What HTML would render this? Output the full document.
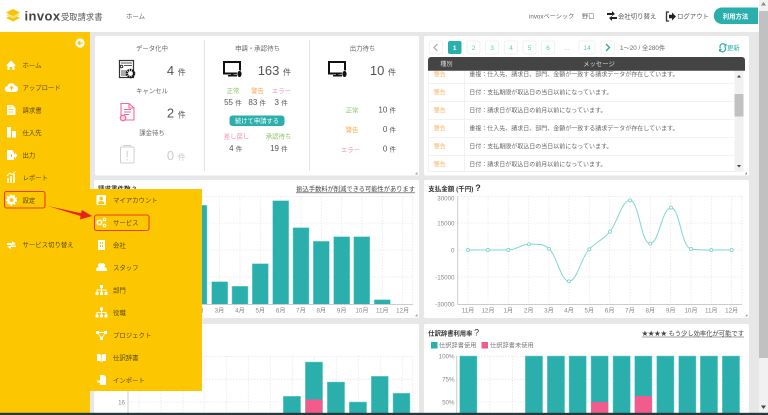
<!DOCTYPE html>
<html lang="ja">
<head>
<meta charset="utf-8">
<title>invox 受取請求書</title>
<style>
html,body{margin:0;padding:0;width:768px;height:415px;overflow:hidden;background:#e7e7e7}
svg{display:block;position:absolute;left:0;top:0;filter:blur(.3px)}
text{font-family:"Liberation Sans","Noto Sans CJK JP",sans-serif;fill:#555}
.s text{font-size:6.4px;fill:#5c4c08}
.c text{font-size:6.4px;fill:#666;text-anchor:middle}
.n text{font-size:8px;fill:#555;text-anchor:end}
.n tspan{font-size:6.5px}
.big text{font-size:13px;fill:#555;text-anchor:end}
.big tspan{font-size:8px}
.ax text{font-size:6.2px;fill:#888;text-anchor:middle}
.ay text{font-size:6.2px;fill:#888;text-anchor:end}
.g line{stroke:#e6e6e6;stroke-width:.8;stroke-dasharray:1.5 1.5}
.b rect{fill:#2aafad;stroke:#7fd6d2;stroke-width:.5}
.w{fill:#fff}
.row text{font-size:6px;fill:#666}
.row .k{fill:#fbb25c}
</style>
</head>
<body>
<svg width="768" height="415" viewBox="0 0 768 415" xmlns="http://www.w3.org/2000/svg">
<!-- header -->
<rect x="0" y="0" width="768" height="32" fill="#fff"/>
<g>
<path d="M13 14.5 L20 18 L13 21.5 L6 18Z" fill="#f8c400"/>
<path d="M13 11.5 L20 15 L13 18.5 L6 15Z" fill="#fde08a"/>
<path d="M13 9 L20 12.5 L13 16 L6 12.5Z" fill="#f8c400"/>
</g>
<text x="24.5" y="20.5" style="font-size:13px;font-weight:bold;letter-spacing:.4px;fill:#444">invox</text>
<text x="61" y="20" style="font-size:8.3px;fill:#555">受取請求書</text>
<text x="126" y="18.5" style="font-size:6.4px;fill:#666">ホーム</text>
<text x="529" y="18.3" style="font-size:6.2px;fill:#666">invoxベーシック</text>
<text x="582" y="18.3" style="font-size:6.2px;fill:#666">野口</text>
<path d="M607 13 L612 13 L612 11 L615 14 L612 16 L612 15 L607 15Z M617 19 L612 19 L612 21 L609 18 L612 16 L612 17 L617 17Z" fill="#222"/>
<text x="618" y="18.5" style="font-size:6.4px;fill:#555">会社切り替え</text>
<path d="M669 12 H666.5 V21 H669" fill="none" stroke="#333" stroke-width="1.3"/>
<path d="M669 14.7 H672 V12.5 L676 16.5 L672 20.5 V18.3 H669Z" fill="#222"/>
<text x="677" y="18.5" style="font-size:6.4px;fill:#555">ログアウト</text>
<path d="M722 7.5 H758 V24 H722 A8.25 8.25 0 0 1 722 7.5Z" fill="#2aafad"/>
<text x="735.5" y="18.3" text-anchor="middle" style="font-size:6.4px;font-weight:bold;fill:#fff">利用方法</text>

<!-- scrollbar -->
<rect x="759" y="0" width="9" height="413" fill="#f1f1f1"/>
<rect x="759" y="11" width="9" height="347" fill="#c1c1c1"/>
<path d="M763.5 2 L766 5.5 H761Z" fill="#888"/>
<path d="M763.5 409 L766 405.5 H761Z" fill="#444"/>

<!-- top-left card -->
<rect x="95" y="36" width="324" height="139.5" rx="2" class="w"/>
<line x1="204.5" y1="40" x2="204.5" y2="171" stroke="#e5e5e5"/>
<line x1="309.5" y1="40" x2="309.5" y2="171" stroke="#e5e5e5"/>
<path d="M417 172.5 V174 H415.5" stroke="#777" fill="none" stroke-width=".8"/>
<g class="c">
<text x="152" y="50.3">データ化中</text>
<text x="152" y="93">キャンセル</text>
<text x="152" y="135">課金待ち</text>
<text x="257.5" y="50.3">申請・承認待ち</text>
<text x="362.5" y="50.3">出力待ち</text>
<text x="233" y="93" style="fill:#8cc46a">正常</text>
<text x="257.5" y="93" style="fill:#fba94c">警告</text>
<text x="281.5" y="93" style="fill:#f78ab0">エラー</text>
<text x="236.5" y="138.3" style="fill:#f78ab0">差し戻し</text>
<text x="278.5" y="138.3" style="fill:#8cc46a">承認待ち</text>
<text x="352" y="112.3" style="fill:#8cc46a">正常</text>
<text x="352" y="132" style="fill:#fba94c">警告</text>
<text x="350.5" y="151.8" style="fill:#f78ab0">エラー</text>
</g>
<!-- icons card -->
<g>
<rect x="119.5" y="60.5" width="14" height="17" fill="#fff" stroke="#333" stroke-width="1.2"/>
<path d="M121 63 H132 M124 65.5 H132 M121 71 H127 M121 73 H127 M121 75 H127" stroke="#555" stroke-width="1"/>
<circle cx="121.5" cy="66.5" r="1.3" fill="none" stroke="#333"/>
<circle cx="130.5" cy="73.5" r="3.6" fill="none" stroke="#111" stroke-width="2.4" stroke-dasharray="1.6 .7"/>
<circle cx="130.5" cy="73.5" r="1" fill="#fff"/>
</g>
<g fill="none" stroke="#f5679a" stroke-width="1.1">
<path d="M121 118 V103.5 H129 L134 108 V120 H124"/>
<path d="M129 103.5 V108 H134 M124 109.5 H131 M124 112 H131 M124 114.5 H129"/>
<circle cx="123" cy="118" r="2.8" fill="#fbd2e0"/>
</g>
<g fill="none" stroke="#d0d0d0" stroke-width="1">
<rect x="120.5" y="147" width="13.5" height="16" rx="1"/>
<path d="M124 147 V145.5 H130.5 V147"/>
<path d="M127.2 151 V157.5 M127.2 159 V160.5"/>
</g>
<g id="mon">
<rect x="224" y="62" width="16" height="11.5" fill="none" stroke="#111" stroke-width="2"/>
<path d="M228 76.5 H237 V75 H233.5 V73.5 H231 V75 H228Z" fill="#111"/>
<ellipse cx="239.5" cy="74" rx="2.4" ry="3.4" fill="#111" stroke="#fff" stroke-width=".6"/>
</g>
<g>
<rect x="329" y="62" width="16" height="11.5" fill="none" stroke="#111" stroke-width="2"/>
<path d="M333 76.5 H342 V75 H338.5 V73.5 H336 V75 H333Z" fill="#111"/>
<ellipse cx="344.5" cy="74" rx="2.4" ry="3.4" fill="#111" stroke="#fff" stroke-width=".6"/>
</g>
<g class="big">
<text x="185.7" y="75">4 <tspan>件</tspan></text>
<text x="185.7" y="117.5">2 <tspan>件</tspan></text>
<text x="185.7" y="160" style="fill:#ccc">0 <tspan>件</tspan></text>
<text x="291" y="75">163 <tspan>件</tspan></text>
<text x="396" y="75">10 <tspan>件</tspan></text>
</g>
<g class="n">
<text x="241.7" y="105">55 <tspan>件</tspan></text>
<text x="266" y="105">83 <tspan>件</tspan></text>
<text x="287.7" y="105">3 <tspan>件</tspan></text>
<text x="242.3" y="151">4 <tspan>件</tspan></text>
<text x="287.7" y="151">19 <tspan>件</tspan></text>
<text x="396" y="112.5">10 <tspan>件</tspan></text>
<text x="396" y="132">0 <tspan>件</tspan></text>
<text x="396" y="151.5">0 <tspan>件</tspan></text>
</g>
<rect x="229.5" y="115.5" width="55" height="10.5" rx="3" fill="#2aafad"/>
<text x="257" y="123" text-anchor="middle" style="font-size:6.3px;fill:#fff">続けて申請する</text>

<!-- messages card -->
<rect x="424" y="36" width="325" height="139.5" rx="2" class="w"/>
<g fill="#fff" stroke="#eee" stroke-width=".8">
<rect x="429.5" y="41" width="13" height="13" rx="2"/>
<rect x="467" y="41" width="13" height="13" rx="2"/>
<rect x="485.5" y="41" width="13" height="13" rx="2"/>
<rect x="504.5" y="41" width="13" height="13" rx="2"/>
<rect x="523" y="41" width="13" height="13" rx="2"/>
<rect x="541.5" y="41" width="13" height="13" rx="2"/>
<rect x="579" y="41" width="16" height="13" rx="2"/>
<rect x="601" y="41" width="13.5" height="13" rx="2"/>
</g>
<rect x="448" y="41" width="13.5" height="13" rx="2" fill="#2aafad"/>
<path d="M437.5 44 L434 47.5 L437.5 51" fill="none" stroke="#aaa" stroke-width="1.2"/>
<path d="M606 44 L609.5 47.5 L606 51" fill="none" stroke="#2aafad" stroke-width="1.4"/>
<g>
<text x="454.7" y="49.8" text-anchor="middle" style="font-size:6.5px;font-weight:bold;fill:#fff">1</text>
<text x="473.5" y="49.8" text-anchor="middle" style="font-size:6.5px;fill:#5cc">2</text>
<text x="492" y="49.8" text-anchor="middle" style="font-size:6.5px;fill:#5cc">3</text>
<text x="511" y="49.8" text-anchor="middle" style="font-size:6.5px;fill:#5cc">4</text>
<text x="529.5" y="49.8" text-anchor="middle" style="font-size:6.5px;fill:#5cc">5</text>
<text x="548" y="49.8" text-anchor="middle" style="font-size:6.5px;fill:#5cc">6</text>
<text x="567" y="49.8" text-anchor="middle" style="font-size:6.5px;fill:#aaa">...</text>
<text x="587" y="49.8" text-anchor="middle" style="font-size:6.5px;fill:#5cc">14</text>
</g>
<text x="620" y="49.8" style="font-size:6.3px;fill:#666">1〜20 / 全280件</text>
<path d="M720.5 48.5 A3 3 0 0 1 725.5 45 M725 47 A3 3 0 0 1 720 50.5" fill="none" stroke="#2aafad" stroke-width="1.2"/>
<path d="M726.5 43.5 V46.5 H723.5Z M719 52 V49 H722Z" fill="#2aafad"/>
<text x="727" y="49.8" style="font-size:6.4px;fill:#2aafad">更新</text>

<rect x="428" y="71" width="317" height="100" fill="#fff"/>
<path d="M428 60 A3 3 0 0 1 431 57 H742 A3 3 0 0 1 745 60 V70.7 H428Z" fill="#444"/>
<text x="446.5" y="66" text-anchor="middle" style="font-size:6.1px;fill:#ddd">種別</text>
<text x="599" y="66" text-anchor="middle" style="font-size:6.4px;fill:#ddd">メッセージ</text>
<g stroke="#eee" stroke-width=".8">
<line x1="428" y1="83.5" x2="734" y2="83.5"/>
<line x1="428" y1="101.5" x2="734" y2="101.5"/>
<line x1="428" y1="119.5" x2="734" y2="119.5"/>
<line x1="428" y1="137.5" x2="734" y2="137.5"/>
<line x1="428" y1="155.5" x2="734" y2="155.5"/>
<line x1="428" y1="171.3" x2="745" y2="171.3"/>
<line x1="428.3" y1="71" x2="428.3" y2="171"/>
<line x1="464.5" y1="71" x2="464.5" y2="171"/>
</g>
<g class="row">
<text class="k" x="433.7" y="76.6">警告</text><text x="469.3" y="76.6">重複：仕入先、請求日、部門、金額が一致する請求データが存在しています。</text>
<text class="k" x="433.7" y="94.6">警告</text><text x="469.3" y="94.6">日付：支払期限が取込日の当日以前になっています。</text>
<text class="k" x="433.7" y="112.6">警告</text><text x="469.3" y="112.6">日付：請求日が取込日の前月以前になっています。</text>
<text class="k" x="433.7" y="130.6">警告</text><text x="469.3" y="130.6">重複：仕入先、請求日、部門、金額が一致する請求データが存在しています。</text>
<text class="k" x="433.7" y="148.6">警告</text><text x="469.3" y="148.6">日付：支払期限が取込日の当日以前になっています。</text>
<text class="k" x="433.7" y="166.6">警告</text><text x="469.3" y="166.6">日付：請求日が取込日の前月以前になっています。</text>
</g>
<rect x="734.5" y="71" width="9" height="100" fill="#f1f1f1"/>
<rect x="734.5" y="94" width="9" height="22.5" fill="#c1c1c1"/>
<path d="M739 75 L741 77.5 H737Z M739 167.5 L741 165 H737Z" fill="#444"/>
<path d="M746.5 172.5 V174 H745" stroke="#777" fill="none" stroke-width=".8"/>

<!-- left chart card -->
<rect x="94" y="180" width="325" height="138" rx="2" class="w"/>
<text x="98" y="191" style="font-size:6.5px;font-weight:bold;fill:#333">請求書件数 ?</text>
<text x="415" y="191.2" text-anchor="end" style="font-size:6.26px;fill:#444">振込手数料が削減できる可能性があります</text>
<line x1="296" y1="192.8" x2="415" y2="192.8" stroke="#444" stroke-width=".6"/>
<g class="g">
<line x1="125" y1="196.5" x2="413" y2="196.5"/><line x1="125" y1="223" x2="413" y2="223"/><line x1="125" y1="250" x2="413" y2="250"/><line x1="125" y1="277" x2="413" y2="277"/>
<line x1="219.5" y1="196" x2="219.5" y2="304"/><line x1="240" y1="196" x2="240" y2="304"/><line x1="260.3" y1="196" x2="260.3" y2="304"/><line x1="280.7" y1="196" x2="280.7" y2="304"/><line x1="301" y1="196" x2="301" y2="304"/><line x1="321.3" y1="196" x2="321.3" y2="304"/><line x1="341.7" y1="196" x2="341.7" y2="304"/><line x1="362" y1="196" x2="362" y2="304"/><line x1="382.3" y1="196" x2="382.3" y2="304"/><line x1="402.7" y1="196" x2="402.7" y2="304"/><line x1="412.7" y1="196" x2="412.7" y2="304"/>
</g>
<g class="b">
<rect x="191" y="205.3" width="16" height="99"/>
<rect x="211.7" y="281.7" width="16" height="22.6"/>
<rect x="232" y="286.3" width="16" height="18"/>
<rect x="252.3" y="263.7" width="16" height="40.6"/>
<rect x="272.7" y="200.7" width="16" height="103.6"/>
<rect x="293" y="227.7" width="16" height="76.6"/>
<rect x="313.3" y="241.3" width="16" height="63"/>
<rect x="333.7" y="236.7" width="16" height="67.6"/>
<rect x="353.8" y="236.7" width="16" height="67.6"/>
<rect x="374.3" y="299.7" width="16" height="4.6"/>
</g>
<line x1="120" y1="304.5" x2="413" y2="304.5" stroke="#ccc"/>
<g class="ax">
<text x="199" y="312.3">2月</text><text x="219.5" y="312.3">3月</text><text x="240" y="312.3">4月</text><text x="260.3" y="312.3">5月</text><text x="280.7" y="312.3">6月</text><text x="301" y="312.3">7月</text><text x="321.3" y="312.3">8月</text><text x="341.7" y="312.3">9月</text><text x="362" y="312.3">10月</text><text x="382.3" y="312.3">11月</text><text x="402.7" y="312.3">12月</text>
</g>
<path d="M417 314.5 V316 H415.5" stroke="#777" fill="none" stroke-width=".8"/>

<!-- line chart card -->
<rect x="424" y="180" width="325" height="138" rx="2" class="w"/>
<text x="428.3" y="191" style="font-size:6.5px;font-weight:bold;fill:#333">支払金額 (千円) <tspan style="font-size:9px">?</tspan></text>
<g class="g">
<line x1="458" y1="196.5" x2="742" y2="196.5"/><line x1="458" y1="223" x2="742" y2="223"/><line x1="458" y1="250" x2="742" y2="250"/><line x1="458" y1="277" x2="742" y2="277"/>
<line x1="468" y1="196" x2="468" y2="304"/><line x1="488" y1="196" x2="488" y2="304"/><line x1="508.3" y1="196" x2="508.3" y2="304"/><line x1="528.7" y1="196" x2="528.7" y2="304"/><line x1="549" y1="196" x2="549" y2="304"/><line x1="569" y1="196" x2="569" y2="304"/><line x1="589.3" y1="196" x2="589.3" y2="304"/><line x1="609.7" y1="196" x2="609.7" y2="304"/><line x1="630" y1="196" x2="630" y2="304"/><line x1="650.3" y1="196" x2="650.3" y2="304"/><line x1="670.7" y1="196" x2="670.7" y2="304"/><line x1="691" y1="196" x2="691" y2="304"/><line x1="711.3" y1="196" x2="711.3" y2="304"/><line x1="731.7" y1="196" x2="731.7" y2="304"/><line x1="742" y1="196" x2="742" y2="304"/>
</g>
<path d="M457.7 196 V304.5 H742" fill="none" stroke="#ccc"/>
<g class="ay">
<text x="454.5" y="200.5">30000</text><text x="454.5" y="225.3">15000</text><text x="454.5" y="252.3">0</text><text x="454.5" y="279.3">-15000</text><text x="454.5" y="306.3">-30000</text>
</g>
<path d="M468 250 L508 250 C516 250,521 244.3,529 244.3 C537 244.3,543 243,549 248.7 C557 256,561 281.3,569 281.3 C577 281.3,581 258,589 249.3 C596 242,603 240,610 231.7 C618 221,622 200.3,630 200.3 C639 200.3,641 243.7,650 243.7 C659 243.7,662 207.7,671 207.7 C680 207.7,681 247,691 249 C697 250,703 250,711 250 L732 250" fill="none" stroke="#7fd6d2" stroke-width="1"/>
<g fill="#fff" stroke="#7fd6d2" stroke-width=".9">
<circle cx="468" cy="250" r="1.5"/><circle cx="488" cy="250" r="1.5"/><circle cx="508.3" cy="250" r="1.5"/><circle cx="529" cy="244.3" r="1.5"/><circle cx="549" cy="248.7" r="1.5"/><circle cx="569" cy="281.3" r="1.5"/><circle cx="589.3" cy="249.3" r="1.5"/><circle cx="610" cy="231.7" r="1.5"/><circle cx="630" cy="200.3" r="1.5"/><circle cx="650.3" cy="243.7" r="1.5"/><circle cx="671" cy="207.7" r="1.5"/><circle cx="691" cy="249" r="1.5"/><circle cx="711.3" cy="250" r="1.5"/><circle cx="731.7" cy="250" r="1.5"/>
</g>
<g class="ax">
<text x="468" y="312.3">11月</text><text x="488" y="312.3">12月</text><text x="508.3" y="312.3">1月</text><text x="528.7" y="312.3">2月</text><text x="549" y="312.3">3月</text><text x="569" y="312.3">4月</text><text x="589.3" y="312.3">5月</text><text x="609.7" y="312.3">6月</text><text x="630" y="312.3">7月</text><text x="650.3" y="312.3">8月</text><text x="670.7" y="312.3">9月</text><text x="691" y="312.3">10月</text><text x="711.3" y="312.3">11月</text><text x="731.7" y="312.3">12月</text>
</g>
<path d="M747 314.5 V316 H745.5" stroke="#777" fill="none" stroke-width=".8"/>

<!-- bottom left card -->
<rect x="94" y="324" width="325" height="95" rx="2" class="w"/>
<g class="g">
<line x1="128" y1="356.5" x2="413" y2="356.5"/><line x1="128" y1="379.3" x2="413" y2="379.3"/><line x1="128" y1="402" x2="413" y2="402"/>
<line x1="204.3" y1="356" x2="204.3" y2="413"/><line x1="226.3" y1="356" x2="226.3" y2="413"/><line x1="248.3" y1="356" x2="248.3" y2="413"/><line x1="270.3" y1="356" x2="270.3" y2="413"/><line x1="292.3" y1="356" x2="292.3" y2="413"/><line x1="314.3" y1="356" x2="314.3" y2="413"/><line x1="336.3" y1="356" x2="336.3" y2="413"/><line x1="358.3" y1="356" x2="358.3" y2="413"/><line x1="380.3" y1="356" x2="380.3" y2="413"/><line x1="402.3" y1="356" x2="402.3" y2="413"/><line x1="412.7" y1="356" x2="412.7" y2="413"/>
<line x1="139" y1="391" x2="139" y2="413"/><line x1="161" y1="391" x2="161" y2="413"/><line x1="183" y1="391" x2="183" y2="413"/>
</g>
<line x1="128" y1="391" x2="128" y2="413" stroke="#ccc"/>
<g class="b">
<rect x="283.3" y="396.3" width="17.3" height="20"/>
<rect x="305.3" y="362" width="17.3" height="54"/>
<rect x="327.3" y="382" width="17.3" height="34"/>
<rect x="349.3" y="402" width="17.3" height="14"/>
<rect x="371.3" y="376.3" width="17" height="40"/>
<rect x="393" y="393.3" width="17" height="23"/>
</g>
<rect x="305.5" y="399.5" width="17" height="14" fill="#f25c8d"/>
<text x="125" y="404.3" text-anchor="end" style="font-size:6.2px;fill:#888">16</text>

<!-- bottom right card -->
<rect x="424" y="324" width="325" height="95" rx="2" class="w"/>
<text x="428.3" y="335.5" style="font-size:6.3px;font-weight:bold;fill:#333">仕訳辞書利用率 <tspan style="font-size:9px;font-weight:normal">?</tspan></text>
<text x="744" y="335.5" text-anchor="end" style="font-size:6.3px;fill:#444">★★★★ もう少し効率化が可能です</text>
<line x1="642" y1="337" x2="744" y2="337" stroke="#444" stroke-width=".6"/>
<rect x="431" y="342" width="6.5" height="6.5" fill="#2aafad"/>
<text x="439" y="347.3" style="font-size:6.25px;fill:#777">仕訳辞書使用</text>
<rect x="481.5" y="342" width="6.5" height="6.5" fill="#f25c8d"/>
<text x="490" y="347.3" style="font-size:6.25px;fill:#777">仕訳辞書未使用</text>
<g class="g">
<line x1="457" y1="379.3" x2="742" y2="379.3"/><line x1="457" y1="402" x2="742" y2="402"/>
<line x1="490" y1="356" x2="490" y2="413"/><line x1="512.5" y1="356" x2="512.5" y2="413"/><line x1="742" y1="356" x2="742" y2="413"/>
<line x1="457" y1="356.3" x2="742" y2="356.3"/>
</g>
<line x1="456.7" y1="356" x2="456.7" y2="413" stroke="#ccc"/>
<g class="ay">
<text x="454.5" y="358.3">100%</text><text x="454.5" y="381.5">75%</text><text x="454.5" y="404.3">50%</text>
</g>
<g class="b">
<rect x="459.7" y="356" width="17.3" height="60"/>
<rect x="525.3" y="356" width="17.3" height="60"/>
<rect x="547.3" y="356" width="17.3" height="60"/>
<rect x="569" y="356" width="17.3" height="60"/>
<rect x="591" y="356" width="17.3" height="60"/>
<rect x="613" y="356" width="17.3" height="60"/>
<rect x="634.7" y="356" width="17.3" height="60"/>
<rect x="656.7" y="356" width="17.3" height="60"/>
<rect x="678.7" y="356" width="17.3" height="60"/>
<rect x="700.3" y="356" width="17.3" height="60"/>
<rect x="722.3" y="356" width="17.3" height="60"/>
</g>
<rect x="591.2" y="402" width="17" height="11" fill="#f25c8d"/>
<rect x="634.9" y="396" width="17" height="17" fill="#f25c8d"/>

<!-- sidebar -->
<rect x="0" y="32" width="90" height="381" fill="#fcc600"/>
<rect x="90" y="189" width="112" height="202" fill="#fcc600"/>
<circle cx="80" cy="43" r="4.6" fill="#fff"/>
<path d="M82.8 43 H78.5 M80.3 41 L78 43 L80.3 45" fill="none" stroke="#fcc600" stroke-width="1.2"/>

<g fill="#fff">
<!-- home -->
<path d="M6 65.5 L11 60.5 L16 65.5 H14.5 V70 H12.3 V67 H9.7 V70 H7.5 V65.5Z"/>
<!-- upload cloud -->
<path d="M8 92 A3 3 0 0 1 7.5 86 A4 4 0 0 1 15 85.5 A3.3 3.3 0 0 1 15.5 92Z"/>
<!-- invoice -->
<path d="M7 105 H12.5 L15.5 108 V115 H7Z"/>
<!-- vendor -->
<path d="M7 127 H11 V137.5 H7Z M12 131 H16 V137.5 H12Z"/>
<!-- output -->
<path d="M7 150 H12 L14 152 V154 H11 V157 H14 V160 H7Z M12 154 H15 V152.5 L17.5 155.5 L15 158.5 V157 H12Z"/>
<!-- report -->
<path d="M7 178 H9 V183 H7Z M10 176 H12 V183 H10Z M13 174 H15 V183 H13Z" opacity=".8"/>
<path d="M7 176 L10 173 L12 174.5 L15.5 171.5" fill="none" stroke="#fff" stroke-width=".9"/>
<!-- gear -->
<circle cx="11.5" cy="200" r="3.2" fill="none" stroke="#fff" stroke-width="2.6"/>
<circle cx="11.5" cy="200" r="5" fill="none" stroke="#fff" stroke-width="1.3" stroke-dasharray="1.8 1.8"/>
<!-- switch -->
<path d="M7 243 H12 V241 L16 244 L12 245 H7Z M16 247 H11 V249 L7 246.5 L11 245.5 H16Z"/>
<!-- popup icons -->
<rect x="96.5" y="195" width="9.5" height="10" rx="1"/>
<circle cx="99.5" cy="222.5" r="2.2" fill="none" stroke="#fff" stroke-width="1.6"/>
<circle cx="104.5" cy="219.5" r="1.3" fill="none" stroke="#fff" stroke-width="1.1"/>
<circle cx="104.5" cy="225.5" r="1.3" fill="none" stroke="#fff" stroke-width="1.1"/>
<path d="M98 240 H105 V250 H98Z"/>
<path d="M96 271 Q96 267 99 267 Q96.5 265 99 263.5 Q101 262.5 101.5 264 Q102 262.5 104 263.5 Q106.5 265 104 267 Q107 267 107 271Z"/>
<path d="M100 285 H103 V288 H102 V289.5 H106.5 V292 H107.5 V295 H104.5 V292 H105.5 V290.5 H102 V292 H103 V295 H100 V292 H101 V290.5 H97.5 V292 H98.5 V295 H95.5 V292 H96.5 V289.5 H101 V288 H100Z"/>
<path d="M100 307.5 H103 V310.5 H102 V312 H106.5 V314.5 H107.5 V317.5 H104.5 V314.5 H105.5 V313 H102 V314.5 H103 V317.5 H100 V314.5 H101 V313 H97.5 V314.5 H98.5 V317.5 H95.5 V314.5 H96.5 V312 H101 V310.5 H100Z"/>
<rect x="96" y="331" width="3" height="3"/><rect x="104" y="331" width="3" height="3"/><rect x="100" y="337" width="3" height="3"/>
<path d="M98 332.5 H105 M98 333.5 L101.5 338 M105 333.5 L101.5 338" stroke="#fff" stroke-width=".9"/>
<path d="M97 354 Q100 353.5 101.3 355 V362 Q100 360.5 97 361Z M106 354 Q103 353.5 101.8 355 V362 Q103 360.5 106 361Z"/>
<path d="M100 375 H104 L106 377 V385 H100 V382 H102.5 V381 H100Z M97 380.5 H100 V379 L102.5 381.5 L100 384 V382.5 H97Z"/>
</g>
<path d="M8.5 107 h3 M8.5 109.5 h5 M8.5 112 h5" stroke="#fcc600" stroke-width=".8"/>
<path d="M11.5 90.5 V87.5 M9.7 88.5 L11.5 86.5 L13.3 88.5" stroke="#fcc600" fill="none" stroke-width="1"/>
<circle cx="101.2" cy="198.5" r="1.8" fill="#fcc600"/>
<path d="M98 204 Q98 201 101.2 201 Q104.5 201 104.5 204Z" fill="#fcc600"/>
<path d="M100 242 h1 v2 h-1Z M102 242 h1 v2 h-1Z M100 245 h1 v2 h-1Z M102 245 h1 v2 h-1Z" fill="#fcc600"/>

<g class="s">
<text x="22.5" y="67.5">ホーム</text>
<text x="22.5" y="90">アップロード</text>
<text x="22.5" y="112.5">請求書</text>
<text x="22.5" y="135">仕入先</text>
<text x="22.5" y="157.5">出力</text>
<text x="22.5" y="180">レポート</text>
<text x="22.5" y="202.5">設定</text>
<text x="22.5" y="247">サービス切り替え</text>
<text x="113" y="202.5">マイアカウント</text>
<text x="113" y="225">サービス</text>
<text x="113" y="247.5">会社</text>
<text x="113" y="270">スタッフ</text>
<text x="113" y="292.5">部門</text>
<text x="113" y="315">役職</text>
<text x="113" y="337.5">プロジェクト</text>
<text x="113" y="360">仕訳辞書</text>
<text x="113" y="382.5">インポート</text>
</g>

<!-- annotations -->
<rect x="4.5" y="191.5" width="40.5" height="16.5" rx="2" fill="none" stroke="#e8401c" stroke-width="1.1"/>
<rect x="94.5" y="215" width="54.5" height="15.5" rx="2" fill="none" stroke="#e8401c" stroke-width="1.1"/>
<path d="M48 206 L81 213.3 L82 210 L92 216 L80 219.5 L80.5 216Z" fill="#e8201c"/>

<!-- bottom edge -->
<rect x="0" y="412.8" width="768" height="2.2" fill="#27393a"/>
</svg>
</body>
</html>
